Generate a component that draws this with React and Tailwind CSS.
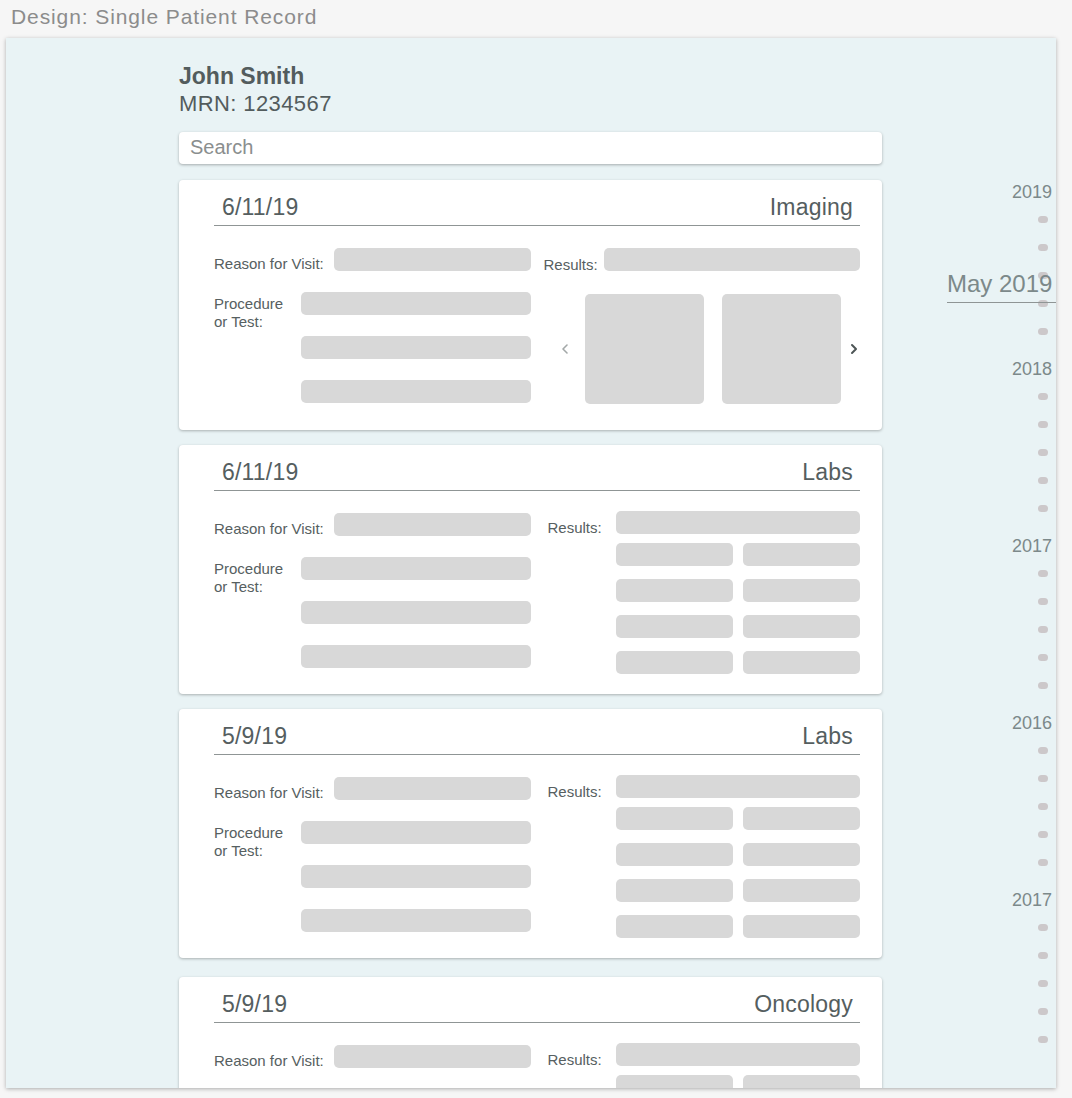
import React from 'react'

const cards = [
  { date: '6/11/19', type: 'Imaging', kind: 'imaging' },
  { date: '6/11/19', type: 'Labs', kind: 'labs' },
  { date: '5/9/19', type: 'Labs', kind: 'labs' },
  { date: '5/9/19', type: 'Oncology', kind: 'labs' },
]

const years = ['2019', '2018', '2017', '2016', '2017']

function Bar({ className = '' }) {
  return <div className={`h-[23px] rounded-[5px] bg-[#d8d8d8] ${className}`} />
}

function LeftColumn({ top }) {
  return (
    <div className={`flex flex-col ${top}`}>
      <div className="flex h-[23px] items-start justify-between">
        <span className="mt-[7px] whitespace-nowrap text-[15px] leading-[17px]">Reason for Visit:</span>
        <Bar className="w-[197px]" />
      </div>
      <div className="mt-[21px] flex items-start justify-between">
        <span className="mt-[3px] text-[15px] leading-[18px]">
          Procedure
          <br />
          or Test:
        </span>
        <div className="flex w-[230px] flex-col gap-[21px]">
          <Bar />
          <Bar />
          <Bar />
        </div>
      </div>
    </div>
  )
}

function Chevron({ dir, color, width }) {
  return (
    <svg width="8" height="12" viewBox="0 0 8 12" className="shrink-0">
      <polyline
        points={dir === 'left' ? '6,2 2,6 6,10' : '2,2 6,6 2,10'}
        fill="none"
        stroke={color}
        strokeWidth={width}
        strokeLinecap="round"
        strokeLinejoin="round"
      />
    </svg>
  )
}

function ImagingResults() {
  return (
    <div className="flex flex-col">
      <div className="flex h-[23px] items-start">
        <span className="mt-[8px] text-[15px] leading-[17px]">Results:</span>
        <Bar className="ml-[6px] flex-1" />
      </div>
      <div className="mt-[23px] flex items-center pl-[17px]">
        <Chevron dir="left" color="#a3a8a8" width="1.6" />
        <div className="ml-[16px] h-[110px] w-[119px] rounded-[5px] bg-[#d8d8d8]" />
        <div className="ml-[18px] h-[110px] w-[119px] rounded-[5px] bg-[#d8d8d8]" />
        <div className="ml-[9px]">
          <Chevron dir="right" color="#4d5556" width="2" />
        </div>
      </div>
    </div>
  )
}

function LabResults() {
  return (
    <div className="flex items-start justify-between pl-[4px]">
      <span className="mt-[8px] text-[15px] leading-[17px]">Results:</span>
      <div className="flex w-[244px] flex-col">
        <Bar />
        <div className="mt-[9px] grid grid-cols-2 gap-x-[10px] gap-y-[13px]">
          {Array.from({ length: 8 }).map((_, i) => (
            <Bar key={i} />
          ))}
        </div>
      </div>
    </div>
  )
}

function RecordCard({ card, className = '' }) {
  const imaging = card.kind === 'imaging'
  return (
    <div
      className={`rounded-[4px] bg-white pl-[35px] pr-[22px] pt-[14px] text-[#566061] shadow-[0_1px_3px_rgba(0,0,0,0.28)] ${
        imaging ? 'pb-[26px]' : 'pb-[20px]'
      } ${className}`}
    >
      <div className="flex items-center justify-between border-b border-[#8f9595] pb-[5px] pl-[8px] pr-[7px] text-[23px] leading-[26px] tracking-[0.2px] text-[#555e5f]">
        <span>{card.date}</span>
        <span>{card.type}</span>
      </div>
      <div className={`grid grid-cols-2 gap-x-[13px] ${imaging ? 'pt-[22px]' : 'pt-[20px]'}`}>
        <LeftColumn top={imaging ? '' : 'mt-[2px]'} />
        {imaging ? <ImagingResults /> : <LabResults />}
      </div>
    </div>
  )
}

function Timeline() {
  return (
    <div className="flex flex-1 flex-col items-end pr-[4px] pt-[144px] text-[18px] text-[#7c898a]">
      {years.map((y, i) => (
        <div key={i} className="flex shrink-0 flex-col items-end">
          <div className="h-[20px] leading-[20px]">{y}</div>
          <div className="flex flex-col items-end gap-[21px] pb-[24px] pr-[4px] pt-[14px]">
            {Array.from({ length: 5 }).map((_, j) => (
              <div key={j} className="h-[7px] w-[10px] shrink-0 rounded-full bg-[#ccc8ca]" />
            ))}
          </div>
        </div>
      ))}
    </div>
  )
}

export default function App() {
  return (
    <div
      className="h-[1098px] w-[1072px] overflow-hidden bg-[#f6f6f6]"
      style={{ fontFamily: '"Liberation Sans", Arial, sans-serif' }}
    >
      <div className="flex h-[38px] items-center pb-[4px] pl-[11px] text-[21px] tracking-[0.9px] text-[#8c8c8c]">
        Design: Single Patient Record
      </div>
      <div className="relative ml-[6px] flex h-[1050px] w-[1050px] items-start overflow-hidden bg-[#e9f3f5] shadow-[0_1px_4px_rgba(0,0,0,0.3)]">
        <div className="ml-[173px] w-[703px] shrink-0 pt-[24px] text-[#535c5d]">
          <div className="text-[23px] font-bold leading-[28px]">John Smith</div>
          <div className="text-[22px] leading-[28px] tracking-[0.4px]">MRN: 1234567</div>
          <div className="mt-[14px] flex h-[32px] items-center rounded-[4px] bg-white pb-[3px] pl-[11px] text-[20px] text-[#8a8e8e] shadow-[0_1px_3px_rgba(0,0,0,0.3)]">
            Search
          </div>
          <div className="mt-[16px]">
            <RecordCard card={cards[0]} />
            <RecordCard card={cards[1]} className="mt-[15px]" />
            <RecordCard card={cards[2]} className="mt-[15px]" />
            <RecordCard card={cards[3]} className="mt-[19px]" />
          </div>
        </div>
        <Timeline />
        <div className="absolute right-0 top-[232px] w-[109px] whitespace-nowrap border-b border-[#8f9595] pb-[4px] pr-[4px] text-right text-[24px] leading-[28px] text-[#7c898a]">
          May 2019
        </div>
      </div>
    </div>
  )
}
